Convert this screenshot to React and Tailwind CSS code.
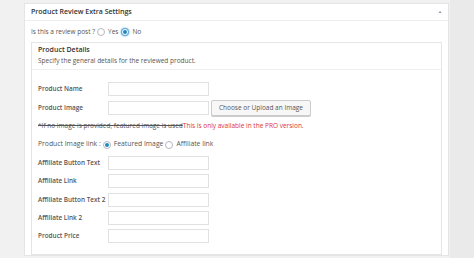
const font = { fontFamily: '"Open Sans", "Liberation Sans", sans-serif' };

function Radio({ checked, focus }) {
  return (
    <span
      className={`inline-flex h-[8px] w-[8px] shrink-0 items-center justify-center rounded-full border bg-white ${
        focus ? 'border-[#5b9dd9] shadow-[0_0_2px_rgba(30,140,190,0.8)]' : 'border-[#b4b9be]'
      }`}
    >
      {checked && <span className="h-[4px] w-[4px] rounded-full bg-[#1e8cbe]" />}
    </span>
  );
}

function Field({ label, h = 'h-[18px]' }) {
  return (
    <div className={`flex ${h} items-center`}>
      <div className="w-[70px] shrink-0 whitespace-nowrap text-[6.4px] font-semibold text-[#555]">{label}</div>
      <div className="h-[14px] w-[101px] border border-[#e1e1e1] bg-white" />
    </div>
  );
}

export default function App() {
  return (
    <div className="flex h-[258px] w-[474px] bg-[#f1f1f1] text-[6.5px] text-[#444]" style={font}>
      <div className="w-[24px] shrink-0" />
      <div className="mt-[3px] flex h-[253px] w-[425px] shrink-0 flex-col border border-[#e5e5e5] bg-white">
        <div className="flex h-[18px] items-center justify-between border-b border-[#eeeeee] pl-[6px] pr-[6px]">
          <span className="text-[7px] font-semibold text-[#333]">Product Review Extra Settings</span>
          <span className="text-[4px] text-[#888]">▲</span>
        </div>
        <div className="flex h-[22px] items-center gap-[2px] whitespace-nowrap pl-[6px] text-[#555]">
          <span>Is this a review post ?</span>
          <Radio />
          <span className="ml-[1px] mr-[1px]">Yes</span>
          <Radio checked focus />
          <span className="ml-[1px]">No</span>
        </div>
        <div className="ml-[6px] mr-[6px] border border-[#e5e5e5]">
          <div className="border-b border-[#f0f0f0] px-[6px] pb-[3px] pt-[1px]">
            <div className="text-[7px] font-semibold leading-[11px] text-[#333]">Product Details</div>
            <div className="leading-[11px] text-[#555]">Specify the general details for the reviewed product.</div>
          </div>
          <div className="px-[6px] pb-[9px] pt-[9px]">
            <Field label="Product Name" h="h-[19px]" />
            <div className="flex h-[19px] items-center">
              <div className="w-[70px] shrink-0 whitespace-nowrap text-[6.4px] font-semibold text-[#555]">Product Image</div>
              <div className="h-[14px] w-[101px] border border-[#e1e1e1] bg-white" />
              <div className="ml-[2px] flex h-[16px] w-[100px] items-center justify-center whitespace-nowrap rounded-[2px] border border-[#cccccc] bg-[#f7f7f7] text-[#555] shadow-[0_1px_0_#ccc]">
                Choose or Upload an Image
              </div>
            </div>
            <div className="flex h-[18px] items-center whitespace-nowrap">
              <span className="text-[#555] line-through">*If no image is provided, featured image is used</span>
              <span className="text-[#dd3333]">This is only available in the PRO version.</span>
            </div>
            <div className="flex h-[19px] items-center gap-[2px] whitespace-nowrap text-[6.8px] text-[#555]">
              <span>Product Image link :</span>
              <Radio checked />
              <span className="ml-[1px]">Featured Image</span>
              <Radio />
              <span className="ml-[1px]">Affiliate link</span>
            </div>
            <Field label="Affiliate Button Text" />
            <Field label="Affiliate Link" />
            <Field label="Affiliate Button Text 2" h="h-[19px]" />
            <Field label="Affiliate Link 2" />
            <Field label="Product Price" />
          </div>
        </div>
      </div>
      <div className="ml-[1px] flex-1 bg-[#eaeaea]" />
    </div>
  );
}
